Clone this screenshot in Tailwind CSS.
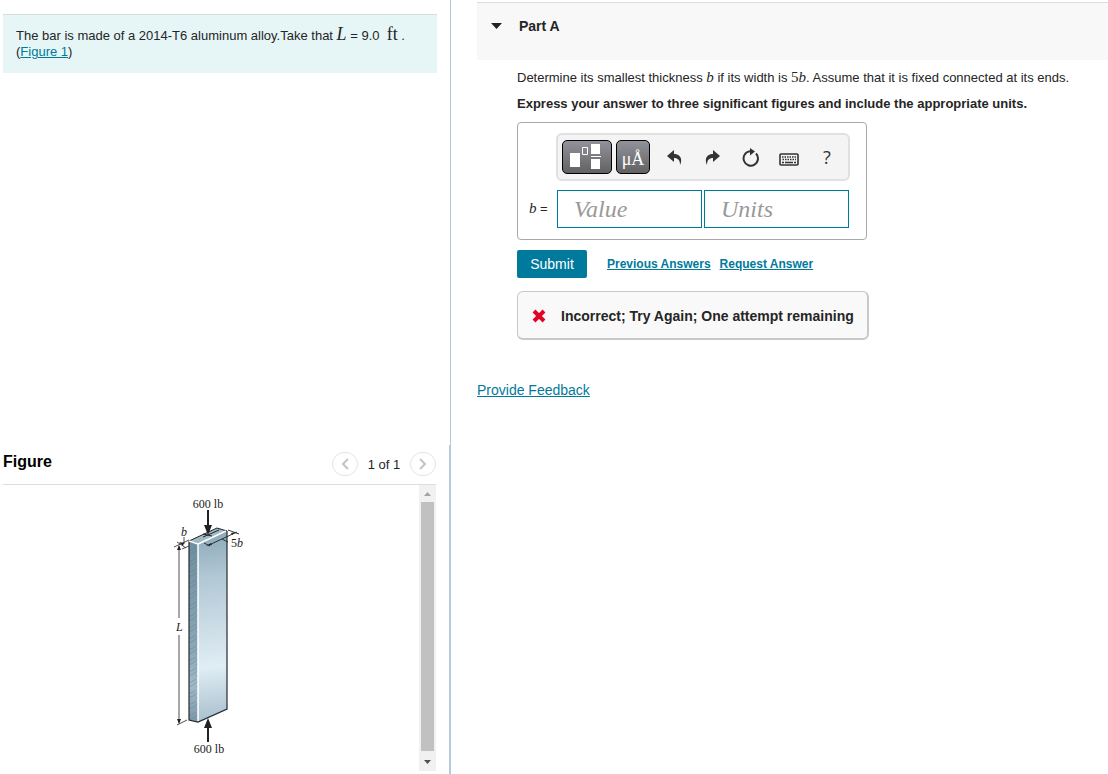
<!DOCTYPE html>
<html lang="en">

<head>
    <meta charset="UTF-8">
    <meta name="viewport" content="width=device-width, initial-scale=1.0">
    <title>Part A</title>
    <script src="https://cdn.jsdelivr.net/npm/@tailwindcss/browser@4"></script>
</head>

<body class="bg-white font-['Liberation_Sans',sans-serif] text-[13px] leading-4 text-[#252525]">
    <div class="flex min-h-screen">
        <!-- problem and figure -->
        <aside class="flex w-[451px] shrink-0 flex-col">
            <section class="h-[445px] border-r border-[#b5c8d8] pt-[14px] pr-[13px] pl-[3px]">
                <div class="h-[59px] border-t border-[#d9dcdc] bg-[#e6f6f7] px-[13px] pt-[10px]">
                    <p class="whitespace-pre-wrap">The bar is made of a 2014-T6 aluminum alloy.Take that <i class="font-['Liberation_Serif',serif] text-lg leading-none">L</i> = 9.0  <span class="font-['Liberation_Serif',serif] text-lg leading-none">ft</span> .</p>
                    <p>(<a href="#figure" class="text-[#007a9c] underline">Figure 1</a>)</p>
                </div>
            </section>
            <section id="figure" class="flex grow flex-col border-r-2 border-[#b5cadd] pr-[13px] pb-[3px] pl-[3px]">
                <div class="flex h-10 items-center border-b border-[#dddddd]">
                    <h2 class="grow pb-[6px] text-base font-bold text-black">Figure</h2>
                    <button aria-label="Previous figure" class="mb-[2px] grid h-6 w-[26px] place-items-center rounded-full border border-[#e4e4e4]">
                        <svg class="h-3 w-2" viewBox="0 0 8 12" fill="none" stroke="#c4c4c4" stroke-width="2"><path d="M7 1 2 6l5 5" /></svg>
                    </button>
                    <span class="w-[52px] text-center">1 of 1</span>
                    <button aria-label="Next figure" class="mb-[2px] grid h-6 w-[26px] place-items-center rounded-full border border-[#e4e4e4]">
                        <svg class="h-3 w-2" viewBox="0 0 8 12" fill="none" stroke="#c4c4c4" stroke-width="2"><path d="m1 1 5 5-5 5" /></svg>
                    </button>
                </div>
                <div class="flex grow">
                    <div class="flex grow justify-center pt-[5px] pr-[2px]">
                        <svg class="h-[275px] w-[100px] font-['Liberation_Serif',serif] text-[11px]" viewBox="0 0 100 275" role="img" aria-label="Bar under axial load">
                            <defs>
                                <linearGradient id="front" x1="0" y1="0" x2="0.02" y2="1">
                                    <stop offset="0" stop-color="#8aa7b7" />
                                    <stop offset="0.25" stop-color="#b1c8d5" />
                                    <stop offset="0.72" stop-color="#e0edf4" />
                                    <stop offset="1" stop-color="#a9c1cf" />
                                </linearGradient>
                                <linearGradient id="side" x1="0" y1="0" x2="0" y2="1">
                                    <stop offset="0" stop-color="#6f8f9f" />
                                    <stop offset="0.6" stop-color="#8ba8b7" />
                                    <stop offset="0.8" stop-color="#a0bac7" />
                                    <stop offset="1" stop-color="#7c99a8" />
                                </linearGradient>
                                <pattern id="grain" width="9" height="11" patternUnits="userSpaceOnUse">
                                    <path d="M0 5q5 1 9-3M0 10q6-1 9-4" fill="none" stroke="#55788a" stroke-opacity=".4" />
                                </pattern>
                            </defs>
                            <path d="M29 51 57 38l10 3-29 13z" fill="#9fb9c6" stroke="#222" />
                            <path d="M29 51v179l9 2V54z" fill="url(#side)" />
                            <path d="M29 51v179l9 2V54z" fill="url(#grain)" />
                            <path d="M38 54 67 41v178l-29 13z" fill="url(#front)" />
                            <path d="M29 51v179l9 2 29-13V41" fill="none" stroke="#252b30" stroke-width="1.2" />
                            <path d="M29 51l9 3v177M38 54l28-13" fill="none" stroke="#fff" stroke-width="1.5" />
                            <g fill="none" stroke="#222" stroke-width="1">
                                <path d="M43 44l9 2M43 47l16-7" />
                                <path d="M14 57 29 50M22 59l7-3M17 52l9 6M24 47v7M19 56v72M19 145v88M17 235l10-5" stroke-width=".8" />
                                <path d="M49 55 77 42M44 53l6 3M68 40l11 4M62 49l6 3" stroke-width=".9" />
                            </g>
                            <g fill="#222">
                                <path d="m19 55 2 5h-4zM19 234l-2-5h4zM46 56l5-3 1 2zM76 42l-5 1 1 2zM23 56l-4-4 5 1z" />
                                <path d="M47 20h2v15h3l-4 10-4-10h3zM48 228l4 10h-3v14h-2v-14h-3z" />
                                <text x="48" y="18" text-anchor="middle" class="text-xs">600 lb</text>
                                <text x="49" y="263" text-anchor="middle" class="text-xs">600 lb</text>
                                <text x="21" y="46" class="text-xs" font-style="italic">b</text>
                                <text x="71" y="57" class="text-xs">5<tspan font-style="italic">b</tspan></text>
                                <text x="16" y="141" class="text-xs" font-style="italic">L</text>
                            </g>
                        </svg>
                    </div>
                    <div class="flex w-[17px] flex-col items-center bg-[#f1f1f1]">
                        <svg class="h-[17px] w-[17px]" viewBox="0 0 17 17"><path d="M5 11h7L8.500 7z" fill="#a3a3a3" /></svg>
                        <div class="w-[13px] grow bg-[#c1c1c1]"></div>
                        <svg class="h-5 w-[17px]" viewBox="0 0 17 20"><path d="M5 9h7L8.500 13z" fill="#505050" /></svg>
                    </div>
                </div>
            </section>
        </aside>

        <!-- answer -->
        <main class="min-w-0 grow pt-[2px] pl-[26px]">
            <header class="flex h-[58px] items-start gap-[17px] border-t border-[#dddddd] bg-[#f8f8f8] pt-[15px] pl-[14px]">
                <svg class="mt-[5px] h-[6px] w-[11px]" viewBox="0 0 11 6"><path d="M0 0h11L5.500 6z" fill="#222" /></svg>
                <h1 class="text-sm leading-4 font-bold">Part A</h1>
            </header>
            <div class="pt-[10px] pl-10">
                <p>Determine its smallest thickness <i class="font-['Liberation_Serif',serif] text-[15px] leading-none">b</i> if its width is <span class="font-['Liberation_Serif',serif] text-[15px] leading-none">5<i>b</i></span>. Assume that it is fixed connected at its ends.</p>
                <p class="mt-[10px] font-bold">Express your answer to three significant figures and include the appropriate units.</p>

                <form class="mt-[10px] w-[350px] rounded border border-[#a8a8a8] pt-[10px] pr-4 pb-[11px] pl-[11px]">
                    <div class="ml-[27px] flex h-12 items-center rounded-md border-2 border-[#e0e0e0] bg-[#f4f4f4] pl-1">
                        <button type="button" aria-label="Templates" class="h-[34px] w-[50px] rounded-[5px] border border-black bg-linear-to-b from-[#92929b] to-[#626264]">
                            <svg class="h-8 w-12" viewBox="0 0 48 32"><path d="M7 12h10v14H7zM28 3h9v10h-9zM28 18h9v10h-9zM28 15h10v1H28z" fill="#fff" /><path d="M19.500 6.500h5v7h-5z" fill="none" stroke="#fff" /></svg>
                        </button>
                        <button type="button" aria-label="Symbols" class="ml-1 h-[34px] w-[34px] rounded-[5px] border border-black bg-linear-to-b from-[#92929b] to-[#626264] pt-1 font-['Liberation_Serif',serif] text-lg leading-6 text-white">μÅ</button>
                        <button type="button" aria-label="Undo" class="ml-[17px]">
                            <svg class="h-[17px] w-[15px]" viewBox="0 0 15 17" fill="#333"><path d="M0 7 7 1v4c6 0 9 5 6 11 0-5-2-7-6-7v4z" /></svg>
                        </button>
                        <button type="button" aria-label="Redo" class="ml-[23px]">
                            <svg class="h-[17px] w-[15px]" viewBox="0 0 15 17" fill="#333"><path d="M15 7 8 1v4C2 5-1 10 2 16c0-5 2-7 6-7v4z" /></svg>
                        </button>
                        <button type="button" aria-label="Reset" class="ml-[22px]">
                            <svg class="h-[19px] w-[18px]" viewBox="0 0 18 19"><path d="M14 5.500a7.200 7.200 0 1 1-6-2.200h2" fill="none" stroke="#333" stroke-width="2" /><path d="M8 0l5 3.500L8 7.500z" fill="#333" /></svg>
                        </button>
                        <button type="button" aria-label="Keyboard shortcuts" class="mt-1 ml-[19px]">
                            <svg class="h-[13px] w-5" viewBox="0 0 20 13" fill="none" stroke="#333"><rect x="1" y="1" width="18" height="11" rx="1" stroke-width="1.600" /><path d="M3 4h14M3.500 6.500H17" stroke-width="1.300" stroke-dasharray="1.500 1" /><path d="M3 9.500h2M6 9.500h8M15 9.500h2" stroke-width="1.300" /></svg>
                        </button>
                        <button type="button" aria-label="Help" class="ml-6 font-['Open_Sans',sans-serif] text-lg leading-5 text-[#333]">?</button>
                    </div>
                    <div class="mt-[9px] flex items-center">
                        <label for="value" class="w-7 shrink-0"><i class="font-['Liberation_Serif',serif] text-[15px] leading-none">b</i> =</label>
                        <input id="value" type="text" placeholder="Value" class="h-[38px] w-[145px] border border-[#007a9c] px-4 font-['Liberation_Serif',serif] text-2xl italic placeholder:text-[#999]">
                        <input id="units" type="text" placeholder="Units" aria-label="Units" class="ml-[2px] h-[38px] w-[145px] border border-[#007a9c] px-4 font-['Liberation_Serif',serif] text-2xl italic placeholder:text-[#999]">
                    </div>
                </form>

                <div class="mt-[10px] flex items-center text-xs font-bold text-[#007a9c]">
                    <button class="h-7 w-[70px] rounded-xs bg-[#007a9c] text-sm font-normal text-white">Submit</button>
                    <a href="#" class="ml-5 underline">Previous Answers</a>
                    <a href="#" class="ml-[9px] underline">Request Answer</a>
                </div>

                <div class="mt-[13px] flex h-[49px] w-[352px] items-center rounded-md border border-r-2 border-b-2 border-[#c8c8c8] bg-[#f9f9f9] pt-px pl-[14px]">
                    <svg class="h-[14px] w-[14px]" viewBox="0 0 14 14"><path d="m2 2 10 10M12 2 2 12" stroke="#e00425" stroke-width="4" /></svg>
                    <p class="ml-[15px] text-sm leading-4 font-bold">Incorrect; Try Again; One attempt remaining</p>
                </div>
            </div>
            <a href="#" class="mt-[42px] inline-block text-sm leading-4 text-[#007a9c] underline">Provide Feedback</a>
        </main>
    </div>
</body>

</html>
